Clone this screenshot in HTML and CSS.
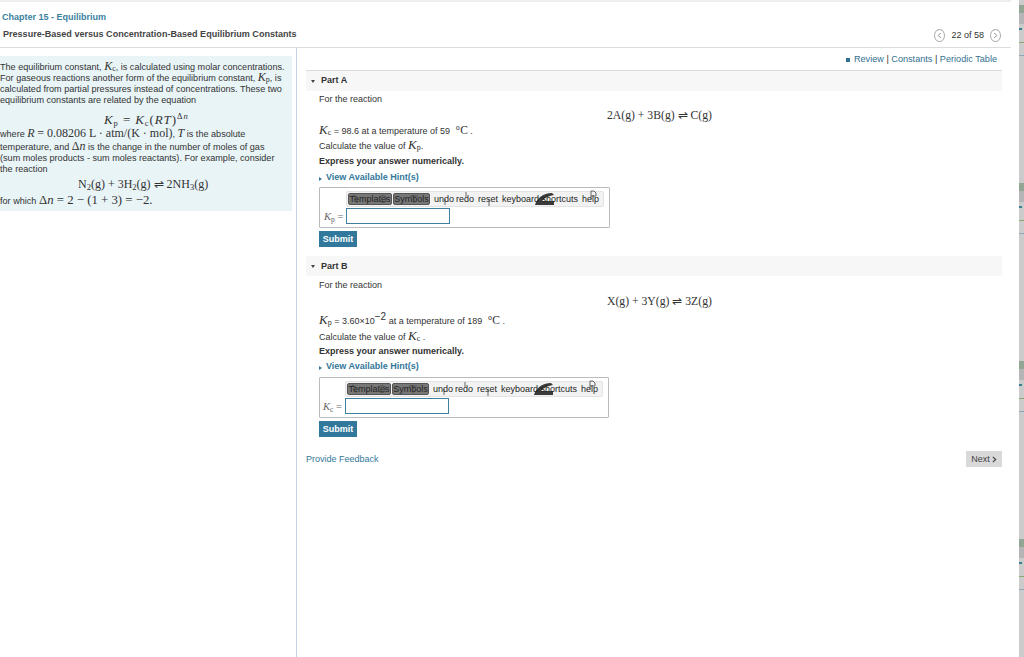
FILE: index.html
```html
<!DOCTYPE html>
<html lang="en">
<head>
<meta charset="utf-8">
<title>Chapter 15 - Equilibrium</title>
<link rel="stylesheet" href="styles.css">
</head>
<body>
<div class="main">
  <div class="topbar"></div>
  <header class="head">
    <h1 class="chapter">Chapter 15 - Equilibrium</h1>
    <div class="head-row">
      <h2 class="title">Pressure-Based versus Concentration-Based Equilibrium Constants</h2>
      <div class="pager">
        <span class="round"><svg viewBox="0 0 6 8" class="chev"><path d="M4.5 1 1.5 4l3 3"/></svg></span>
        <span class="count">22 of 58</span>
        <span class="round"><svg viewBox="0 0 6 8" class="chev"><path d="M1.5 1l3 3-3 3"/></svg></span>
      </div>
    </div>
  </header>
  <div class="columns">
    <aside class="left">
      <div class="intro">
        <p class="l1">The equilibrium constant, <i class="m">K</i><sub class="ms">c</sub>, is calculated using molar concentrations.</p>
        <p class="l1">For gaseous reactions another form of the equilibrium constant, <i class="m">K</i><sub class="ms">p</sub>, is</p>
        <p class="l1">calculated from partial pressures instead of concentrations. These two</p>
        <p class="l1">equilibrium constants are related by the equation</p>
        <p class="eq eq1"><i>K</i><sub>p</sub> = <i>K</i><sub>c</sub>(<i>RT</i>)<sup>Δ<i>n</i></sup></p>
        <p class="l1 where">where <i class="m">R</i> <span class="m">= 0.08206 L · atm/(K · mol)</span>, <i class="m">T</i> is the absolute</p>
        <p class="l1">temperature, and <span class="m">Δ<i>n</i></span> is the change in the number of moles of gas</p>
        <p class="l1">(sum moles products - sum moles reactants). For example, consider</p>
        <p class="l1">the reaction</p>
        <p class="eq eq2">N<sub>2</sub>(g) + 3H<sub>2</sub>(g) ⇌ 2NH<sub>3</sub>(g)</p>
        <p class="l1 which">for which <span class="m">Δ<i>n</i> = 2 − (1 + 3) = −2.</span></p>
      </div>
    </aside>
    <main class="right">
      <div class="links"><span class="sq"></span><a>Review</a> | <a>Constants</a> | <a>Periodic Table</a></div>

      <section class="part part-a">
        <div class="part-head"><span class="caret"></span>Part A</div>
        <div class="part-body">
          <p class="txt">For the reaction</p>
          <p class="reaction">2A(g) + 3B(g) ⇌ C(g)</p>
          <p class="txt given"><i class="mk">K</i><sub class="ks">c</sub> = 98.6 at a temperature of 59 <span class="unit">°C</span> .</p>
          <p class="txt calc">Calculate the value of <i class="mk">K</i><sub class="ks">p</sub>.</p>
          <p class="txt strong">Express your answer numerically.</p>
          <p class="hint"><span class="hint-caret"></span>View Available Hint(s)</p>
          <div class="answer">
            <div class="toolbar">
              <span class="tb dark tb-t">Templates<svg class="ov ov1" viewBox="0 0 10 10"><path d="M1 1l4 2M5 3v6"/></svg><svg class="ov ov2" viewBox="0 0 10 10"><circle cx="5" cy="5" r="3.5"/></svg></span>
              <span class="tb dark tb-s">Symbols<svg class="ov ov3" viewBox="0 0 10 10"><path d="M1 2h8M5 2v7"/></svg></span>
              <span class="tb tb-u">undo<svg class="ov ov4" viewBox="0 0 10 10"><path d="M5 4v6"/></svg></span>
              <span class="tb tb-r">redo<svg class="ov ov5" viewBox="0 0 10 10"><path d="M5 1v5"/></svg></span>
              <span class="tb tb-x">reset<svg class="ov ov6" viewBox="0 0 10 10"><path d="M5 4v6"/></svg></span>
              <span class="tb tb-k">keyboard shortcuts<svg class="ov swoosh" viewBox="0 0 19 12"><path d="M0 12C2 5 8 0 17 0l2 2C13 3 9 5 7 8h12v4Z"/></svg></span>
              <span class="tb tb-h">help<svg class="ov ov7" viewBox="0 0 10 10"><path d="M3 9V1h3l2 2v3H3"/></svg></span>
            </div>
            <div class="entry"><span class="var"><i>K</i><sub>p</sub> =</span><span class="field"></span></div>
          </div>
          <div class="submit">Submit</div>
        </div>
      </section>

      <section class="part part-b">
        <div class="part-head"><span class="caret"></span>Part B</div>
        <div class="part-body">
          <p class="txt">For the reaction</p>
          <p class="reaction">X(g) + 3Y(g) ⇌ 3Z(g)</p>
          <p class="txt given-b"><i class="mk">K</i><sub class="ks">p</sub> = 3.60×10<sup class="exp">−2</sup> at a temperature of 189 <span class="unit">°C</span> .</p>
          <p class="txt calc-b">Calculate the value of <i class="mk">K</i><sub class="ks">c</sub> .</p>
          <p class="txt strong">Express your answer numerically.</p>
          <p class="hint"><span class="hint-caret"></span>View Available Hint(s)</p>
          <div class="answer">
            <div class="toolbar">
              <span class="tb dark tb-t">Templates<svg class="ov ov1" viewBox="0 0 10 10"><path d="M1 1l4 2M5 3v6"/></svg><svg class="ov ov2" viewBox="0 0 10 10"><circle cx="5" cy="5" r="3.5"/></svg></span>
              <span class="tb dark tb-s">Symbols<svg class="ov ov3" viewBox="0 0 10 10"><path d="M1 2h8M5 2v7"/></svg></span>
              <span class="tb tb-u">undo<svg class="ov ov4" viewBox="0 0 10 10"><path d="M5 4v6"/></svg></span>
              <span class="tb tb-r">redo<svg class="ov ov5" viewBox="0 0 10 10"><path d="M5 1v5"/></svg></span>
              <span class="tb tb-x">reset<svg class="ov ov6" viewBox="0 0 10 10"><path d="M5 4v6"/></svg></span>
              <span class="tb tb-k">keyboard shortcuts<svg class="ov swoosh" viewBox="0 0 19 12"><path d="M0 12C2 5 8 0 17 0l2 2C13 3 9 5 7 8h12v4Z"/></svg></span>
              <span class="tb tb-h">help<svg class="ov ov7" viewBox="0 0 10 10"><path d="M3 9V1h3l2 2v3H3"/></svg></span>
            </div>
            <div class="entry"><span class="var"><i>K</i><sub>c</sub> =</span><span class="field"></span></div>
          </div>
          <div class="submit">Submit</div>
        </div>
      </section>

      <div class="foot">
        <a class="feedback">Provide Feedback</a>
        <span class="next">Next <svg class="next-ico" viewBox="0 0 6 8"><path d="M1 .8 4.4 4 1 7.2"/></svg></span>
      </div>
    </main>
  </div>
</div>
<div class="strip">
  <div class="thumb"><b class="t-a"></b><b class="t-b"></b><b class="t-c"></b><b class="t-d"></b><b class="t-e"></b></div>
  <div class="thumb"><b class="t-a"></b><b class="t-b"></b><b class="t-c"></b><b class="t-d"></b><b class="t-e"></b></div>
  <div class="thumb"><b class="t-a"></b><b class="t-b"></b><b class="t-c"></b><b class="t-d"></b><b class="t-e"></b></div>
  <div class="thumb"><b class="t-a"></b><b class="t-b"></b><b class="t-c"></b><b class="t-d"></b><b class="t-e"></b></div>
</div>
</body>
</html>
```

FILE: styles.css
```css
* { box-sizing: border-box; }
html, body { margin: 0; height: 657px; overflow: hidden; }
body {
  display: flex;
  background: #fff;
  font-family: "Liberation Sans", Arial, sans-serif;
  font-size: 9px;
  color: #333;
}
p { margin: 0; }
.main { width: 1011px; height: 657px; display: flex; flex-direction: column; }
.topbar { height: 2px; background: #eee; flex: none; }

.head { height: 46px; padding-top: 10px; border-bottom: 1px solid #dcdcdc; flex: none; }
.chapter { margin: 0 0 0 2px; font-size: 9px; line-height: 11px; font-weight: 700; color: #3b7f9f; }
.head-row { display: flex; justify-content: space-between; align-items: center; margin-top: 3px; height: 17px; }
.title { margin: 0 0 0 3px; font-size: 9.05px; line-height: 11px; font-weight: 700; color: #444; }
.pager { display: flex; align-items: center; margin-right: 10px; margin-top: 1px; }
.round { width: 11px; height: 13px; border: 1px solid #aaa; border-radius: 50%; display: flex; align-items: center; justify-content: center; }
.chev { width: 5px; height: 7px; fill: none; stroke: #777; stroke-width: 1; }
.count { margin: 0 6px; font-size: 9px; color: #333; }

.columns { display: flex; flex: 1; min-height: 0; }
.left { width: 297px; border-right: 1px solid #c3d3e3; padding-top: 8px; flex: none; }
.intro { width: 292px; height: 155px; background: #e9f4f7; padding-top: 6px; }
.l1 { height: 11px; line-height: 11px; white-space: nowrap; font-size: 9.1px; }
.m { font-family: "Liberation Serif", serif; font-size: 12px; line-height: 0; }
.ms { font-family: "Liberation Serif", serif; font-size: 8px; line-height: 0; vertical-align: -1px; }
.eq { font-family: "Liberation Serif", serif; font-size: 12px; white-space: nowrap; }
.eq sub, .eq sup { font-size: 8.5px; line-height: 0; }
.eq sub { vertical-align: -2px; }
.eq1 { height: 18px; line-height: 18px; padding-left: 104px; margin-top: 5px; font-size: 13px; letter-spacing: .9px; }
.where + .l1 { margin-top: 2px; }
.eq2 { height: 19px; line-height: 19px; padding-left: 78px; }
.which { margin-top: 2px; }
.which .m { font-size: 12.8px; }

.right { flex: 1; min-width: 0; padding: 0 9px; position: relative; }
.links { height: 22px; padding: 6px 5px 0 0; line-height: 11px; text-align: right; color: #333; font-size: 9.15px; white-space: nowrap; }
.links a { color: #33708f; }
.sq { display: inline-block; width: 4px; height: 4px; margin-right: 4px; background: #33708f; }

.part-head { height: 21px; background: #f7f7f7; border-top: 1px solid #dcdcdc; font-weight: 700; color: #333; padding: 0 0 2px 5px; display: flex; align-items: center; }
.part-b .part-head { border-top-color: #f7f7f7; height: 20px; }
.caret { width: 0; height: 0; border: 2.5px solid transparent; border-top: 3px solid #444; border-bottom: 0; margin: 2px 6px 0 0; flex: none; }
.part-body { padding-left: 13px; height: 162px; }
.part-b .part-body { height: 171px; }
.txt { line-height: 11px; height: 11px; }
.part-body > .txt:first-child { margin-top: 3px; }
.part-b .part-body > .txt:first-child { margin-top: 4px; }
.reaction { font-family: "Liberation Serif", serif; font-size: 11.7px; line-height: 13px; height: 13px; padding-left: 288px; margin-top: 4px; white-space: nowrap; }
.mk { font-family: "Liberation Serif", serif; font-size: 13px; line-height: 0; }
.ks { font-family: "Liberation Serif", serif; font-size: 8px; line-height: 0; vertical-align: -1px; }
.unit { font-family: "Liberation Serif", serif; font-size: 11.5px; margin-left: 3px; line-height: 0; }
.exp { font-size: 10px; line-height: 0; }
.given { margin-top: 4px; height: 12px; }
.calc { margin-top: 3px; }
.given-b { margin-top: 8px; height: 12px; }
.calc-b { margin-top: 4px; }
.strong { font-weight: 700; color: #333; margin-top: 4px; }
.part-b .strong { margin-top: 3px; }
.hint { height: 11px; line-height: 11px; margin-top: 5px; color: #33789a; font-weight: 700; display: flex; align-items: center; }
.part-b .hint { margin-top: 4px; }
.hint-caret { width: 0; height: 0; border: 2px solid transparent; border-left: 3px solid #33789a; border-right: 0; margin: 2px 4px 0 0; }

.answer { width: 291px; height: 41px; margin-top: 4px; border: 1px solid #bbb; border-radius: 1px; padding: 3px 4px 0 26px; }
.part-b .answer { width: 290px; padding-left: 25px; margin-top: 5px; }
.toolbar { display: flex; align-items: center; height: 16px; width: 258px; background: #f2f2f2; border: 1px solid #e3e3e3; border-radius: 2px; padding-left: 1px; font-size: 9px; color: #222; white-space: nowrap; }
.tb { position: relative; display: block; line-height: 12px; }
.dark { background: #777; border: 1px solid #555; border-radius: 2px; color: #222; height: 12px; line-height: 10px; }
.tb-t { width: 44px; text-align: center; }
.tb-s { width: 37px; text-align: center; margin-left: 1px; }
.tb-u { margin-left: 4px; }
.tb-r { margin-left: 2px; }
.tb-x { margin-left: 4px; }
.tb-k { margin-left: 4px; isolation: isolate; }
.tb-h { margin-left: 4px; }
.ov { position: absolute; width: 10px; height: 10px; fill: none; stroke: #444; stroke-width: .8; }
.ov1 { left: 3px; top: 0; }
.ov2 { left: 29px; top: 0; }
.ov3 { left: 15px; top: 0; }
.ov4 { left: 6px; top: 2px; }
.ov5 { left: 5px; top: -2px; }
.ov6 { left: 6px; top: 3px; }
.ov7 { left: 6px; top: -3px; }
.swoosh { left: 33px; top: 0; width: 19px; height: 12px; fill: #3a3a3a; stroke: none; z-index: -1; }

.entry { display: flex; align-items: center; margin-top: 0; height: 18px; margin-left: -22px; }
.var { width: 22px; font-family: "Liberation Serif", serif; font-size: 10.5px; color: #666; white-space: nowrap; }
.var sub { font-size: 7.5px; line-height: 0; vertical-align: -1.5px; }
.field { width: 104px; height: 16px; border: 1px solid #3f7f9f; background: #fff; }

.submit { width: 38px; height: 16px; margin-top: 3px; background: #32789c; color: #fff; font-weight: 700; font-size: 9px; line-height: 16px; text-align: center; }

.foot { display: flex; justify-content: space-between; align-items: center; height: 16px; }
.feedback { color: #33789a; }
.next { width: 36px; height: 16px; background: #d9d9d9; color: #444; display: flex; align-items: center; justify-content: center; gap: 2px; }
.next-ico { width: 5px; height: 7px; fill: none; stroke: #444; stroke-width: 1.5; }

.strip { width: 5px; height: 657px; margin-left: 8px; background: #cbcbcb; padding-top: 5px; overflow: hidden; flex: none; }
.thumb { height: 178px; }
.thumb b { display: block; }
.t-a { height: 8px; background: #93a593; }
.t-b { height: 11px; background: #b5b5b8; }
.t-c { height: 2px; margin-top: 4px; width: 3px; background: #3b7f8f; }
.t-d { height: 1px; margin-top: 12px; background: #8aa86e; }
.t-e { height: 1px; margin-top: 12px; background: #8fa6b8; }
```
